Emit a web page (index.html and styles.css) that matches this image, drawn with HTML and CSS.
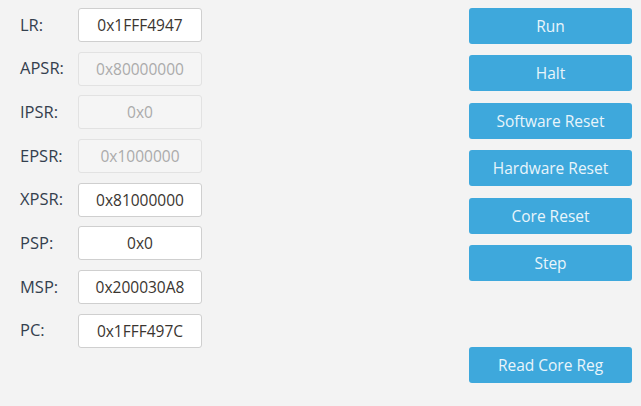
FILE: index.html
```html
<!DOCTYPE html>
<html>
<head>
<meta charset="utf-8">
<link rel="stylesheet" href="styles.css">
</head>
<body>
<div class="panel">
  <div class="regs">
    <div class="row"><span class="lbl">LR:</span><div class="field">0x1FFF4947</div></div>
    <div class="row"><span class="lbl">APSR:</span><div class="field dis">0x80000000</div></div>
    <div class="row"><span class="lbl">IPSR:</span><div class="field dis">0x0</div></div>
    <div class="row"><span class="lbl">EPSR:</span><div class="field dis">0x1000000</div></div>
    <div class="row"><span class="lbl">XPSR:</span><div class="field">0x81000000</div></div>
    <div class="row"><span class="lbl">PSP:</span><div class="field">0x0</div></div>
    <div class="row"><span class="lbl">MSP:</span><div class="field">0x200030A8</div></div>
    <div class="row"><span class="lbl">PC:</span><div class="field">0x1FFF497C</div></div>
  </div>
  <div class="actions">
    <div class="btns">
      <button class="btn">Run</button>
      <button class="btn">Halt</button>
      <button class="btn">Software Reset</button>
      <button class="btn">Hardware Reset</button>
      <button class="btn">Core Reset</button>
      <button class="btn">Step</button>
    </div>
    <button class="btn read">Read Core Reg</button>
  </div>
</div>
</body>
</html>
```
FILE: styles.css
```css
html, body {
  margin: 0;
  padding: 0;
  background: #f3f3f3;
  width: 641px;
  height: 406px;
  overflow: hidden;
  font-family: "Open Sans", "Noto Sans", sans-serif;
}
.panel {
  display: flex;
  padding: 8px 0 0 20px;
}
.regs {
  display: flex;
  flex-direction: column;
  gap: 9.7px;
  width: 449px;
}
.row {
  display: flex;
  align-items: center;
}
.lbl {
  width: 58px;
  font-size: 16.5px;
  color: #34404e;
  margin-top: -2px;
}
.field {
  box-sizing: border-box;
  width: 124px;
  height: 34px;
  border: 1px solid #cfcfcf;
  border-radius: 3px;
  background: #ffffff;
  display: flex;
  align-items: center;
  justify-content: center;
  font-size: 15.5px;
  color: #3a3530;
}
.field.dis {
  background: #f5f5f5;
  border-color: #e2e2e2;
  color: #ababab;
}
.actions {
  display: flex;
  flex-direction: column;
  width: 163px;
}
.btns {
  display: flex;
  flex-direction: column;
  gap: 11.4px;
}
.btn {
  box-sizing: border-box;
  width: 163px;
  height: 36px;
  border: none;
  border-radius: 3px;
  background: #3ea8dc;
  color: #e9f5fb;
  font-family: "Open Sans", "Noto Sans", sans-serif;
  font-size: 15.5px;
  padding: 0;
}
.btn.read {
  margin-top: 66px;
}
```
